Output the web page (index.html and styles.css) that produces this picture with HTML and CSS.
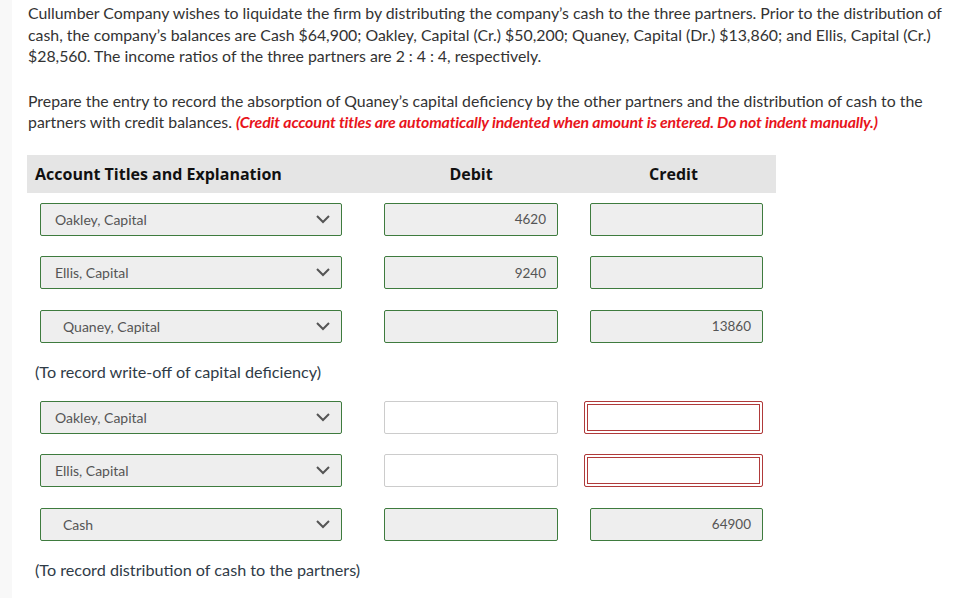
FILE: index.html
```html
<!DOCTYPE html>
<html>
<head>
<meta charset="utf-8">
<link rel="stylesheet" href="styles.css">
</head>
<body>
<div class="page">
  <div class="strip"></div>
  <main class="main">
    <p class="q">Cullumber Company wishes to liquidate the firm by distributing the company’s cash to the three partners. Prior to the distribution of cash, the company’s balances are Cash $64,900; Oakley, Capital (Cr.) $50,200; Quaney, Capital (Dr.) $13,860; and Ellis, Capital (Cr.) $28,560. The income ratios of the three partners are 2&#8197;:&#8197;4&#8197;:&#8197;4, respectively.</p>
    <p class="q q2">Prepare the entry to record the absorption of Quaney’s capital deficiency by the other partners and the distribution of cash to the partners with credit balances. <em class="warn">(Credit account titles are automatically indented when amount is entered. Do not indent manually.)</em></p>

    <div class="table">
      <div class="head">
        <div class="h-acc">Account Titles and Explanation</div>
        <div class="h-num">Debit</div>
        <div class="h-num h-cr">Credit</div>
      </div>

      <div class="row">
        <div class="c-acc"><div class="sel"><span>Oakley, Capital</span><svg class="chev" width="14" height="9" viewBox="0 0 14 9"><polyline points="1,1 7,7 13,1" fill="none" stroke="#555" stroke-width="2"/></svg></div></div>
        <div class="c-dr"><div class="box ok">4620</div></div>
        <div class="c-cr"><div class="box ok"></div></div>
      </div>
      <div class="row">
        <div class="c-acc"><div class="sel"><span>Ellis, Capital</span><svg class="chev" width="14" height="9" viewBox="0 0 14 9"><polyline points="1,1 7,7 13,1" fill="none" stroke="#555" stroke-width="2"/></svg></div></div>
        <div class="c-dr"><div class="box ok">9240</div></div>
        <div class="c-cr"><div class="box ok"></div></div>
      </div>
      <div class="row">
        <div class="c-acc"><div class="sel ind"><span>Quaney, Capital</span><svg class="chev" width="14" height="9" viewBox="0 0 14 9"><polyline points="1,1 7,7 13,1" fill="none" stroke="#555" stroke-width="2"/></svg></div></div>
        <div class="c-dr"><div class="box ok"></div></div>
        <div class="c-cr"><div class="box ok">13860</div></div>
      </div>
      <div class="expl">(To record write-off of capital deficiency)</div>

      <div class="row">
        <div class="c-acc"><div class="sel"><span>Oakley, Capital</span><svg class="chev" width="14" height="9" viewBox="0 0 14 9"><polyline points="1,1 7,7 13,1" fill="none" stroke="#555" stroke-width="2"/></svg></div></div>
        <div class="c-dr"><div class="box blank"></div></div>
        <div class="c-cr c-err"><div class="box err"></div></div>
      </div>
      <div class="row">
        <div class="c-acc"><div class="sel"><span>Ellis, Capital</span><svg class="chev" width="14" height="9" viewBox="0 0 14 9"><polyline points="1,1 7,7 13,1" fill="none" stroke="#555" stroke-width="2"/></svg></div></div>
        <div class="c-dr"><div class="box blank"></div></div>
        <div class="c-cr c-err"><div class="box err"></div></div>
      </div>
      <div class="row">
        <div class="c-acc"><div class="sel ind"><span>Cash</span><svg class="chev" width="14" height="9" viewBox="0 0 14 9"><polyline points="1,1 7,7 13,1" fill="none" stroke="#555" stroke-width="2"/></svg></div></div>
        <div class="c-dr"><div class="box ok"></div></div>
        <div class="c-cr"><div class="box ok">64900</div></div>
      </div>
      <div class="expl">(To record distribution of cash to the partners)</div>
    </div>
  </main>
</div>
</body>
</html>
```

FILE: styles.css
```css
html, body {
  margin: 0;
  padding: 0;
  background: #fff;
}
body {
  font-family: Lato, "Open Sans", sans-serif;
  color: #333;
}
.page {
  display: flex;
  min-height: 598px;
}
.strip {
  width: 12px;
  flex: none;
  background: #f8f8f8;
}
.main {
  flex: 1;
  padding: 2px 8px 0 16px;
}
.q {
  margin: 0;
  font-size: 15.85px;
  line-height: 21.5px;
}
.q2 {
  margin-top: 23px;
}
.warn {
  color: #e8141b;
  font-weight: bold;
  font-style: italic;
  letter-spacing: -0.15px;
}
.table {
  margin-top: 22px;
  width: 749px;
  margin-left: -1px;
}
.head {
  display: grid;
  grid-template-columns: 336px 216px 197px;
  height: 38px;
  align-items: center;
  background: #e5e5e5;
  font-family: "Open Sans", Lato, sans-serif;
  font-weight: bold;
  font-size: 16px;
  color: #111;
}
.h-acc {
  padding-left: 8px;
}
.h-num {
  text-align: center;
}
.h-cr {
  padding-right: 8px;
}
.row {
  display: grid;
  grid-template-columns: 336px 216px 197px;
  padding: 10px 0 10.5px;
  height: 33px;
}
.c-acc {
  padding-left: 13px;
}
.c-dr {
  padding-left: 21px;
}
.c-cr {
  padding-left: 11px;
}
.c-cr.c-err {
  padding-left: 5px;
}
.sel {
  box-sizing: border-box;
  width: 302px;
  height: 33px;
  border: 1px solid #3e7b3e;
  border-radius: 2px;
  background: #eeeeee;
  display: flex;
  align-items: center;
  justify-content: space-between;
  padding: 0 11px 0 14px;
  font-size: 14px;
  color: #555;
}
.sel.ind {
  padding-left: 22px;
}
.chev {
  display: block;
}
.box {
  box-sizing: border-box;
  width: 174px;
  height: 33px;
  border-radius: 2px;
  display: flex;
  align-items: center;
  justify-content: flex-end;
  padding-right: 11px;
  font-size: 13.5px;
  color: #555;
}
.c-cr .box {
  width: 173px;
}
.ok {
  border: 1px solid #3e7b3e;
  background: #eeeeee;
}
.blank {
  border: 1px solid #cccccc;
  background: #fff;
}
.c-cr .err {
  width: 179px;
  border: 1px solid #b03a3a;
  box-shadow: inset 0 0 0 2px #fff, inset 0 0 0 3px #b03a3a;
  background: #fff;
}
.expl {
  height: 37.5px;
  line-height: 37.5px;
  padding-left: 8px;
  font-size: 16.2px;
  color: #2f3b47;
}
```
